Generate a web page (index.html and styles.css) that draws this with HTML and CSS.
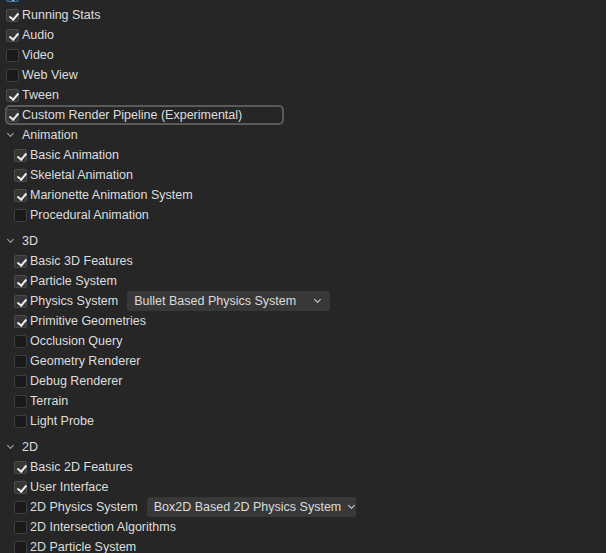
FILE: index.html
```html
<!DOCTYPE html>
<html lang="en">
<head>
    <meta charset="UTF-8">
    <title>Feature Cropping</title>
    <link rel="stylesheet" href="styles.css">
</head>
<body>
    <div class="panel">
        <div class="row"><span class="box checked focus-ring"></span></div>
        <div class="row"><span class="box checked"></span><span>Running Stats</span></div>
        <div class="row"><span class="box checked"></span><span>Audio</span></div>
        <div class="row"><span class="box"></span><span>Video</span></div>
        <div class="row"><span class="box"></span><span>Web View</span></div>
        <div class="row"><span class="box checked"></span><span>Tween</span></div>
        <div class="row focused"><span class="box checked"></span><span>Custom Render Pipeline (Experimental)</span></div>

        <div class="group">
            <div class="row group-title"><span class="chevron"></span><span>Animation</span></div>
            <div class="group-items">
                <div class="row"><span class="box checked"></span><span>Basic Animation</span></div>
                <div class="row"><span class="box checked"></span><span>Skeletal Animation</span></div>
                <div class="row"><span class="box checked"></span><span>Marionette Animation System</span></div>
                <div class="row"><span class="box"></span><span>Procedural Animation</span></div>
            </div>
        </div>

        <div class="group">
            <div class="row group-title"><span class="chevron"></span><span>3D</span></div>
            <div class="group-items">
                <div class="row"><span class="box checked"></span><span>Basic 3D Features</span></div>
                <div class="row"><span class="box checked"></span><span>Particle System</span></div>
                <div class="row">
                    <span class="box checked"></span><span>Physics System</span>
                    <div class="select select-3d"><span>Bullet Based Physics System</span><span class="chevron"></span></div>
                </div>
                <div class="row"><span class="box checked"></span><span>Primitive Geometries</span></div>
                <div class="row"><span class="box"></span><span>Occlusion Query</span></div>
                <div class="row"><span class="box"></span><span>Geometry Renderer</span></div>
                <div class="row"><span class="box"></span><span>Debug Renderer</span></div>
                <div class="row"><span class="box"></span><span>Terrain</span></div>
                <div class="row"><span class="box"></span><span>Light Probe</span></div>
            </div>
        </div>

        <div class="group">
            <div class="row group-title"><span class="chevron"></span><span>2D</span></div>
            <div class="group-items">
                <div class="row"><span class="box checked"></span><span>Basic 2D Features</span></div>
                <div class="row"><span class="box checked"></span><span>User Interface</span></div>
                <div class="row">
                    <span class="box"></span><span>2D Physics System</span>
                    <div class="select select-2d"><span>Box2D Based 2D Physics System</span><span class="chevron"></span></div>
                </div>
                <div class="row"><span class="box"></span><span>2D Intersection Algorithms</span></div>
                <div class="row"><span class="box"></span><span>2D Particle System</span></div>
            </div>
        </div>
    </div>
</body>
</html>
```

FILE: styles.css
```css
* {
    margin: 0;
    padding: 0;
    box-sizing: border-box;
}

body {
    background-color: #262626;
    color: #dedede;
    font-family: 'Liberation Sans', Arial, sans-serif;
    font-size: 12.5px;
    overflow: hidden;
}

.panel {
    margin-top: -15px;
}

.row {
    display: flex;
    align-items: center;
    height: 20px;
    padding-left: 6px;
    gap: 3px;
    white-space: nowrap;
}

.row.focused {
    margin-left: 5px;
    padding-left: 1px;
    width: 279px;
    border-radius: 5px;
    box-shadow: inset 0 0 0 2px #5a5a5a;
}

.box {
    position: relative;
    width: 13px;
    height: 13px;
    flex-shrink: 0;
    border: 1px solid #3e3e3e;
    border-radius: 2px;
    background-color: #1a1a1a;
}

.box.checked {
    background-color: #353535;
    border-color: #4c4c4c;
}

.box.checked::after {
    content: "";
    position: absolute;
    left: 3.5px;
    top: 1px;
    width: 3.5px;
    height: 7px;
    border: solid #ececec;
    border-width: 0 2px 2px 0;
    transform: rotate(40deg);
}

.box.focus-ring {
    border-color: #2f7fb8;
}

.group {
    margin-bottom: 6px;
}

.group-title .chevron {
    width: 9px;
    margin: 0 3px 0 1px;
}

.chevron {
    width: 7px;
    height: 7px;
    flex-shrink: 0;
    position: relative;
}

.chevron::before {
    content: "";
    position: absolute;
    left: 1px;
    top: -1px;
    width: 4px;
    height: 4px;
    border: solid #a8a8a8;
    border-width: 0 1.5px 1.5px 0;
    transform: rotate(45deg);
}

.group-items .row {
    padding-left: 14px;
}

.select {
    display: flex;
    align-items: center;
    height: 20px;
    margin-left: 6px;
    padding: 0 9px 0 7px;
    border-radius: 3px;
    background-color: #383838;
    color: #dcdcdc;
}

.select-3d {
    width: 203px;
    justify-content: space-between;
}

.select-2d {
    width: 209px;
    gap: 7px;
}

.select .chevron::before {
    border-color: #d0d0d0;
}
```
